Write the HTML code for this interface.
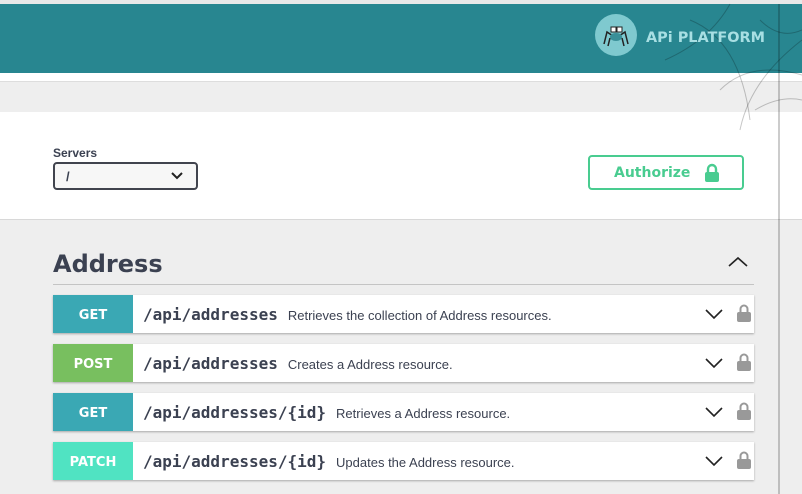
<!DOCTYPE html>
<html><head><style>
*{margin:0;padding:0;box-sizing:border-box}
body{width:802px;height:494px;overflow:hidden;background:#eeeeee;font-family:"Liberation Sans",sans-serif;position:relative}
.a{position:absolute}
.row{position:absolute;left:53px;width:701px;height:38px;background:#fff;box-shadow:0 1px 2px rgba(0,0,0,.3)}
.badge{position:absolute;left:0;top:0;width:80px;height:38px;color:#fff;font-weight:bold;font-size:13px;display:flex;align-items:center;justify-content:center;padding-top:2px;font-family:"DejaVu Sans","Liberation Sans",sans-serif}
.path{position:absolute;left:90px;top:0;height:38px;display:flex;align-items:center;padding-top:1px;font-family:"DejaVu Sans Mono","Liberation Mono",monospace;font-weight:bold;font-size:16px;color:#3b4151;white-space:nowrap}
.desc{font-family:"Liberation Sans",sans-serif;font-weight:normal;font-size:13px;margin-left:10px;padding-top:1px}
.chev{position:absolute;left:652px;top:13px}
.lock{position:absolute;left:684px;top:9px}
</style></head><body>
<div class="a" style="left:0;top:0;width:802px;height:4px;background:#e8e8e8"></div>
<div class="a" style="left:0;top:4px;width:802px;height:69px;background:#288690"></div>
<div class="a" style="left:0;top:73px;width:802px;height:9px;background:#fff;border-bottom:1px solid #ddd"></div>
<div class="a" style="left:0;top:112px;width:802px;height:108px;background:#fff;border-bottom:1px solid #d8d8d8"></div>
<svg class="a" style="left:580px;top:0" width="222" height="140" viewBox="0 0 222 140">
<g fill="none" stroke="rgba(0,0,0,0.22)" stroke-width="1">
<path d="M160 130 Q170 80 222 40"/><path d="M110 20 Q160 40 170 120"/>
<path d="M85 60 Q130 40 150 4"/><path d="M140 90 Q170 60 222 75"/>
<path d="M175 110 Q200 95 222 100"/><path d="M180 20 Q200 40 222 30"/>
</g>
<circle cx="36" cy="35" r="21" fill="#7fc9cf"/>
<g stroke="#222" stroke-width="1.5" fill="none"><path d="M24 44 L27 32 L33 36 M48 44 L45 32 L39 36 M28 46 L30 38 M44 46 L42 38"/></g>
<ellipse cx="36" cy="37" rx="6" ry="4" fill="#3a8f98"/>
<rect x="31" y="27" width="5" height="5" fill="#fff" stroke="#222"/><rect x="37" y="27" width="5" height="5" fill="#fff" stroke="#222"/>
<text x="66" y="42" font-family="DejaVu Sans" font-weight="bold" font-size="14" fill="#a8dfe3" textLength="119" lengthAdjust="spacingAndGlyphs">APi PLATFORM</text>
</svg>
<div class="a" style="left:778px;top:4px;width:2px;height:490px;background:rgba(0,0,0,0.2)"></div>
<div class="a" style="left:53px;top:146px;font-size:12px;font-weight:bold;color:#3b4151">Servers</div>
<div class="a" style="left:53px;top:162px;width:145px;height:28px;border:2px solid #41444e;border-radius:4px;background:#f7f7f7;font-weight:bold;font-size:13px;color:#3b4151;padding:5px 0 0 11px">/
<svg class="a" style="left:116px;top:8px" width="12" height="8"><path d="M1 1 L6 6 L11 1" stroke="#222" stroke-width="2" fill="none"/></svg></div>
<div class="a" style="left:588px;top:155px;width:156px;height:35px;border:2px solid #49cc90;border-radius:4px;background:#fff;color:#49cc90;font-weight:bold;font-size:14px;font-family:'DejaVu Sans',sans-serif;padding:8px 0 0 24px">Authorize
<svg class="a" style="left:114px;top:6px" width="16" height="20"><path d="M4 10 V6 A4 4 0 0 1 12 6 V10" stroke="#49cc90" stroke-width="2.4" fill="none"/><rect x="1" y="9" width="14" height="10" rx="2" fill="#49cc90"/></svg></div>
<div class="a" style="left:53px;top:250px;font-size:24px;font-weight:bold;color:#3b4151;font-family:'DejaVu Sans',sans-serif">Address</div>
<svg class="a" style="left:728px;top:256px" width="20" height="12"><path d="M1 10 L10 2 L19 10" stroke="#222" stroke-width="1.6" fill="none"/></svg>
<div class="a" style="left:53px;top:284px;width:701px;height:1px;background:#c4c4c4"></div>

<div class="row" style="top:295px"><div class="badge" style="background:#3aa8b4">GET</div><div class="path">/api/addresses<span class="desc">Retrieves the collection of Address resources.</span></div>
<svg class="chev" width="18" height="12"><path d="M1 2 L9 10 L17 2" stroke="#222" stroke-width="1.6" fill="none"/></svg>
<svg class="lock" width="14" height="18"><path d="M3.5 8 V5 A3.5 3.5 0 0 1 10.5 5 V8" stroke="#999" stroke-width="2" fill="none"/><rect x="0" y="8" width="14" height="10" rx="2" fill="#999"/></svg></div>

<div class="row" style="top:344px"><div class="badge" style="background:#78bf5f">POST</div><div class="path">/api/addresses<span class="desc">Creates a Address resource.</span></div>
<svg class="chev" width="18" height="12"><path d="M1 2 L9 10 L17 2" stroke="#222" stroke-width="1.6" fill="none"/></svg>
<svg class="lock" width="14" height="18"><path d="M3.5 8 V5 A3.5 3.5 0 0 1 10.5 5 V8" stroke="#999" stroke-width="2" fill="none"/><rect x="0" y="8" width="14" height="10" rx="2" fill="#999"/></svg></div>

<div class="row" style="top:393px"><div class="badge" style="background:#3aa8b4">GET</div><div class="path">/api/addresses/{id}<span class="desc">Retrieves a Address resource.</span></div>
<svg class="chev" width="18" height="12"><path d="M1 2 L9 10 L17 2" stroke="#222" stroke-width="1.6" fill="none"/></svg>
<svg class="lock" width="14" height="18"><path d="M3.5 8 V5 A3.5 3.5 0 0 1 10.5 5 V8" stroke="#999" stroke-width="2" fill="none"/><rect x="0" y="8" width="14" height="10" rx="2" fill="#999"/></svg></div>

<div class="row" style="top:442px"><div class="badge" style="background:#50e3c2">PATCH</div><div class="path">/api/addresses/{id}<span class="desc">Updates the Address resource.</span></div>
<svg class="chev" width="18" height="12"><path d="M1 2 L9 10 L17 2" stroke="#222" stroke-width="1.6" fill="none"/></svg>
<svg class="lock" width="14" height="18"><path d="M3.5 8 V5 A3.5 3.5 0 0 1 10.5 5 V8" stroke="#999" stroke-width="2" fill="none"/><rect x="0" y="8" width="14" height="10" rx="2" fill="#999"/></svg></div>
</body></html>
